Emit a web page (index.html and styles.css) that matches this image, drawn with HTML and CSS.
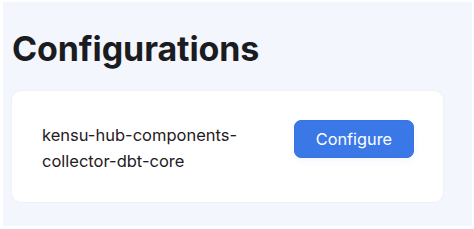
FILE: index.html
```html
<!DOCTYPE html>
<html>
<head>
<meta charset="utf-8">
<link rel="stylesheet" href="styles.css">
</head>
<body>
<main class="page">
  <h1 class="title">Configurations</h1>
  <section class="card">
    <div class="name">kensu-hub-components-collector-dbt-core</div>
    <button class="btn">Configure</button>
  </section>
</main>
</body>
</html>
```
FILE: styles.css
```css
html, body {
  margin: 0;
  padding: 0;
  background: #ffffff;
  width: 474px;
  height: 229px;
  overflow: hidden;
}
.page {
  box-sizing: border-box;
  margin: 2px 2px 0 3px;
  height: 224px;
  background: #f3f6fc;
  padding: 1px 29px 0 9px;
  font-family: Inter, "Noto Sans", sans-serif;
}
.title {
  margin: 0;
  padding-top: 24px;
  font-size: 34px;
  line-height: 44px;
  font-weight: 700;
  color: #1b1c1f;
  letter-spacing: -0.1px;
}
.card {
  margin-top: 20px;
  background: #ffffff;
  border-radius: 9px;
  box-shadow: 0 0 0 1px #eef1f6;
  padding: 29px 29px 28px 30px;
  display: flex;
  justify-content: space-between;
  align-items: flex-start;
}
.name {
  width: 215px;
  font-size: 16.5px;
  line-height: 26px;
  color: #1f2023;
  padding-top: 2px;
}
.btn {
  font-family: Inter, "Noto Sans", sans-serif;
  font-size: 16.3px;
  line-height: 22px;
  color: #ffffff;
  background: #3b78e7;
  border: 1px solid #3a74e0;
  border-radius: 7px;
  padding: 7px 21px;
  cursor: pointer;
  box-shadow: 0 3px 6px rgba(59, 120, 231, 0.06);
}
```
